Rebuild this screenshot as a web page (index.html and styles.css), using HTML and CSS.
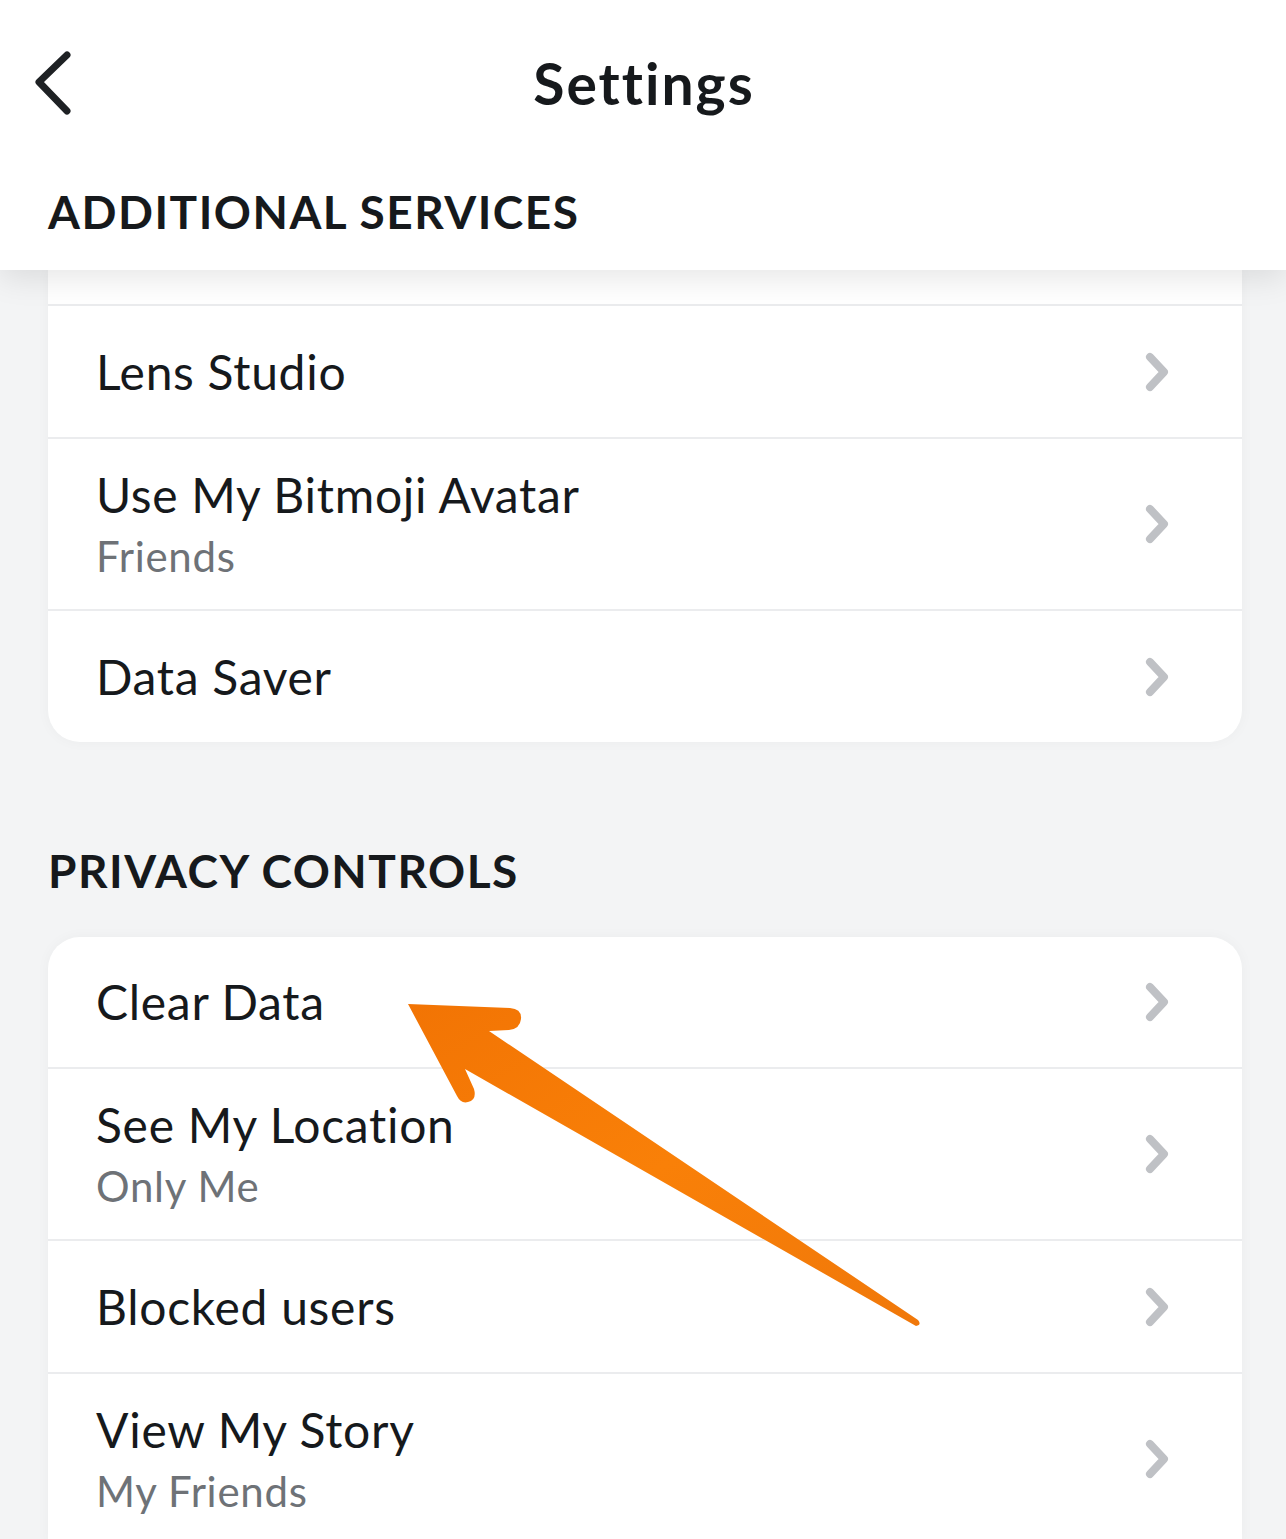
FILE: index.html
```html
<!DOCTYPE html>
<html lang="en">
<head>
<meta charset="utf-8">
<title>Settings</title>
<link rel="stylesheet" href="styles.css">
</head>
<body>
<div class="screen">
  <header class="header">
    <div class="topbar">
      <svg class="back" width="44" height="70" viewBox="0 0 44 70" aria-hidden="true">
        <path d="M35 6 L7 33 L35 62" fill="none" stroke="#1e2124" stroke-width="7" stroke-linecap="round" stroke-linejoin="round"/>
      </svg>
      <h1 class="title">Settings</h1>
    </div>
    <h2 class="section-title">ADDITIONAL SERVICES</h2>
  </header>

  <main class="content">
    <section class="card card-cut">
      <div class="row row-stub"></div>
      <div class="row">
        <div class="row-text"><div class="row-title">Lens Studio</div></div>
        <svg class="chev" width="30" height="44" viewBox="0 0 30 44"><path d="M8 7 L22 22 L8 37" fill="none" stroke="#bfc1c5" stroke-width="8" stroke-linecap="round" stroke-linejoin="round"/></svg>
      </div>
      <div class="row row-tall">
        <div class="row-text"><div class="row-title">Use My Bitmoji Avatar</div><div class="row-sub">Friends</div></div>
        <svg class="chev" width="30" height="44" viewBox="0 0 30 44"><path d="M8 7 L22 22 L8 37" fill="none" stroke="#bfc1c5" stroke-width="8" stroke-linecap="round" stroke-linejoin="round"/></svg>
      </div>
      <div class="row">
        <div class="row-text"><div class="row-title">Data Saver</div></div>
        <svg class="chev" width="30" height="44" viewBox="0 0 30 44"><path d="M8 7 L22 22 L8 37" fill="none" stroke="#bfc1c5" stroke-width="8" stroke-linecap="round" stroke-linejoin="round"/></svg>
      </div>
    </section>

    <h2 class="section-title section-gap">PRIVACY CONTROLS</h2>

    <section class="card card-top">
      <div class="row">
        <div class="row-text"><div class="row-title">Clear Data</div></div>
        <svg class="chev" width="30" height="44" viewBox="0 0 30 44"><path d="M8 7 L22 22 L8 37" fill="none" stroke="#bfc1c5" stroke-width="8" stroke-linecap="round" stroke-linejoin="round"/></svg>
      </div>
      <div class="row row-tall">
        <div class="row-text"><div class="row-title">See My Location</div><div class="row-sub">Only Me</div></div>
        <svg class="chev" width="30" height="44" viewBox="0 0 30 44"><path d="M8 7 L22 22 L8 37" fill="none" stroke="#bfc1c5" stroke-width="8" stroke-linecap="round" stroke-linejoin="round"/></svg>
      </div>
      <div class="row">
        <div class="row-text"><div class="row-title">Blocked users</div></div>
        <svg class="chev" width="30" height="44" viewBox="0 0 30 44"><path d="M8 7 L22 22 L8 37" fill="none" stroke="#bfc1c5" stroke-width="8" stroke-linecap="round" stroke-linejoin="round"/></svg>
      </div>
      <div class="row row-tall">
        <div class="row-text"><div class="row-title">View My Story</div><div class="row-sub">My Friends</div></div>
        <svg class="chev" width="30" height="44" viewBox="0 0 30 44"><path d="M8 7 L22 22 L8 37" fill="none" stroke="#bfc1c5" stroke-width="8" stroke-linecap="round" stroke-linejoin="round"/></svg>
      </div>
    </section>
  </main>

  <svg class="annotation" width="1286" height="1539" viewBox="0 0 1286 1539" aria-hidden="true">
    <defs>
      <linearGradient id="orange" x1="0" y1="0" x2="1" y2="1">
        <stop offset="0" stop-color="#f27404"/>
        <stop offset="0.5" stop-color="#f98008"/>
        <stop offset="1" stop-color="#f0780a"/>
      </linearGradient>
    </defs>
    <path d="M408 1004 L510 1008 Q522 1009 521 1019 Q520 1029 509 1030 L489 1031 L918 1320 Q922 1325 916 1326 L465 1069 L474 1089 Q477 1100 468 1102 Q461 1104 457 1096 Z" fill="url(#orange)"/>
  </svg>
</div>
</body>
</html>
```

FILE: styles.css
```css
html, body {
  margin: 0;
  padding: 0;
}

body {
  background: #f3f4f5;
  font-family: "Lato", "Noto Sans", "Liberation Sans", sans-serif;
  color: #16191c;
}

.screen {
  position: relative;
  width: 1286px;
  height: 1539px;
  overflow: hidden;
}

.header {
  position: relative;
  z-index: 2;
  background: #ffffff;
  height: 270px;
  box-sizing: border-box;
  box-shadow: 0 8px 30px rgba(0, 0, 0, 0.10);
}

.topbar {
  position: relative;
  height: 166px;
  display: flex;
  align-items: center;
  justify-content: center;
}

.back {
  position: absolute;
  left: 32px;
  top: 49px;
}

.title {
  margin: 0;
  font-size: 57px;
  font-weight: 700;
  letter-spacing: 2px;
  line-height: 1;
  color: #16191c;
  padding-left: 2px;
}

.section-title {
  margin: 0;
  padding-left: 48px;
  font-size: 46px;
  font-weight: 700;
  line-height: 56px;
  letter-spacing: 1.5px;
  color: #16191c;
}

.header .section-title {
  margin-top: 18px;
}

.content {
  padding: 0 44px 0 48px;
}

.card {
  background: #ffffff;
  overflow: hidden;
  box-shadow: 0 0 14px rgba(0, 0, 0, 0.035);
}

.card-cut {
  border-radius: 0 0 32px 32px;
}

.card-top {
  border-radius: 32px 32px 0 0;
  margin-top: 38px;
}

.section-gap {
  margin-top: 101px;
  padding-left: 0;
}

.row {
  display: flex;
  align-items: center;
  height: 131px;
  padding: 0 70px 0 48px;
  border-top: 2px solid #ebecee;
}

.row:first-child {
  border-top: none;
}

.card-top .row:first-child {
  height: 130px;
}

.row-stub {
  height: 34px;
}

.row-tall {
  height: 170px;
}

.row-text {
  flex: 1;
  min-width: 0;
}

.row-title {
  font-size: 48px;
  line-height: 60px;
  font-weight: 400;
  color: #16191c;
  letter-spacing: 0.7px;
}

.row-sub {
  font-size: 42px;
  line-height: 56px;
  margin-top: 3px;
  color: #6e7277;
  letter-spacing: 0.7px;
}

.chev {
  flex: none;
  display: block;
}

.annotation {
  position: absolute;
  left: 0;
  top: 0;
  z-index: 3;
  pointer-events: none;
}
```
